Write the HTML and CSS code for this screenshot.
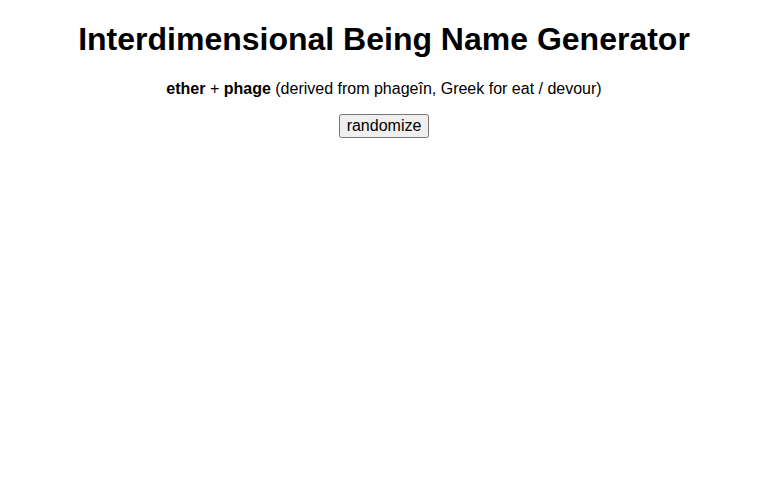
FILE: index.html
```html
<!DOCTYPE html>
<html lang="en">
<head>
<meta charset="utf-8">
<title>Interdimensional Being Name Generator</title>
<link rel="stylesheet" href="styles.css">
</head>
<body>
<main class="generator">
  <h1 class="title">Interdimensional Being Name Generator</h1>
  <p class="result"><strong>ether</strong> + <strong>phage</strong> (derived from phageîn, Greek for eat / devour)</p>
  <button class="randomize" type="button">randomize</button>
</main>
</body>
</html>
```
FILE: styles.css
```css
body {
  margin: 0 8px;
  font-family: "Liberation Sans", Arial, sans-serif;
  color: #000;
  background: #fff;
}

.generator {
  text-align: center;
}

.title {
  font-size: 32px;
  margin: 21px 0 22px;
}

.result {
  font-size: 16px;
  margin: 16px 0;
}

.randomize {
  font-family: "Liberation Sans", Arial, sans-serif;
  font-size: 16px;
}
```
